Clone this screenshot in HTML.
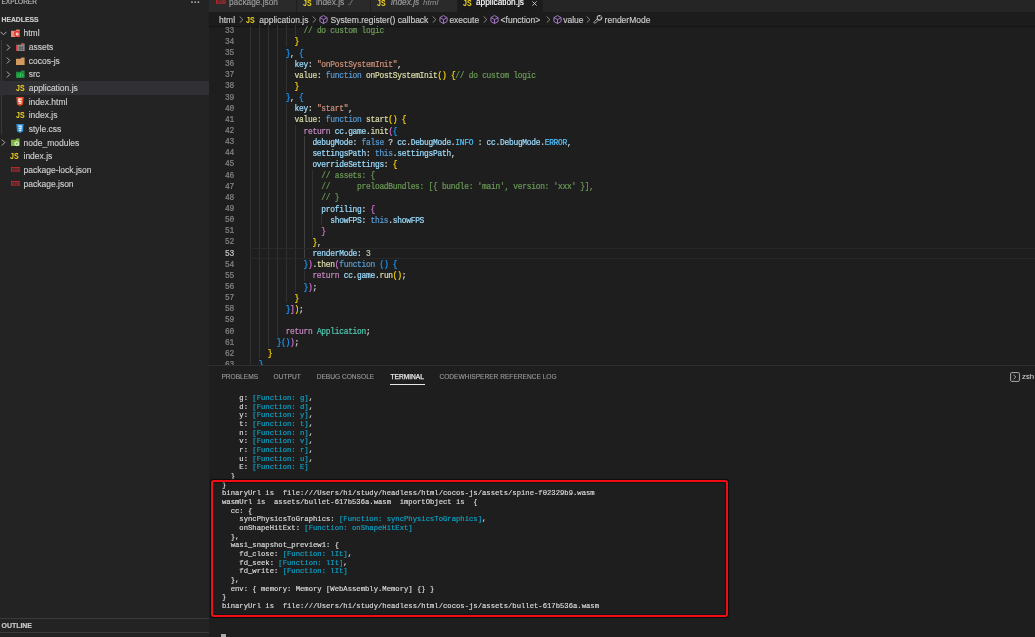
<!DOCTYPE html>
<html><head><meta charset="utf-8"><style>
*{margin:0;padding:0;box-sizing:border-box}
html,body{width:1035px;height:637px;overflow:hidden;background:#1e1e1e}
body{position:relative;font-family:"Liberation Sans",sans-serif}
#root{position:absolute;left:0;top:0;width:1035px;height:637px;will-change:transform;background:#1e1e1e}
#side{position:absolute;left:0;top:0;width:209px;height:637px;background:#232323}
.si{position:absolute;font-size:8.5px;line-height:12px;color:#CCCCCC;white-space:pre;-webkit-text-stroke:0.15px currentColor}
.sel{position:absolute;left:0;width:209px;height:13.3px;background:#303034}
.jsic{position:absolute;font-family:"Liberation Sans",sans-serif;font-weight:bold;color:#F2D31B;white-space:pre;transform:scaleX(0.72);transform-origin:0 0;letter-spacing:-0.1px}
#tabs{position:absolute;left:209px;top:0;width:826px;height:12px;background:#252526}
.tab{position:absolute;top:0;height:12px;background:#2A2A2A;border-right:1px solid #1e1e1e}
.tt{position:absolute;font-size:8.3px;line-height:10px;top:-2.7px;color:#9D9D9D;white-space:pre;-webkit-text-stroke:0.15px currentColor}
#bc{position:absolute;left:209px;top:12px;width:826px;height:14px;background:#1C1C1C;box-shadow:0 1px 1px #141414}
.bt{position:absolute;font-size:8.5px;line-height:12px;top:13.6px;color:#CCCCCC;white-space:pre;-webkit-text-stroke:0.15px currentColor}
.ln{position:absolute;left:209px;width:25px;text-align:right;font-family:"Liberation Mono",monospace;font-size:7.9px;letter-spacing:-0.270px;line-height:11.14px;color:#858585;white-space:pre;-webkit-text-stroke:0.2px currentColor;transform:scaleY(1.16);transform-origin:0 7.68px}
.ln.cur{color:#C6C6C6}
.cl{position:absolute;left:249.9px;font-family:"Liberation Mono",monospace;font-size:7.9px;letter-spacing:-0.270px;line-height:11.14px;white-space:pre;-webkit-text-stroke:0.2px currentColor;transform:scaleY(1.16);transform-origin:0 7.68px}
.cl span{-webkit-text-stroke:0.2px currentColor}
.ig{position:absolute;width:1px}
#panel{position:absolute;left:209px;top:365px;width:826px;height:272px;background:#1E1E1E;border-top:1px solid #2E2E2E}
.pt{position:absolute;top:372px;font-size:6.6px;line-height:9px;color:#9D9D9D;white-space:pre;-webkit-text-stroke:0.1px currentColor}
.tl{position:absolute;left:222.0px;font-family:"Liberation Mono",monospace;font-size:7.2px;letter-spacing:0.020px;line-height:8.657px;color:#DADADA;white-space:pre;-webkit-text-stroke:0.18px currentColor}
.tc{color:#0CA2C6}
</style></head><body><div id="root">
<div id="side"></div>
<div class="si" style="left:1.5px;top:-3.6px;font-size:6.5px;color:#BBBBBB">EXPLORER</div>
<svg style="position:absolute;left:190px;top:0" width="10" height="4" viewBox="0 0 10 4"><circle cx="2" cy="2.1" r="0.85" fill="#C5C5C5"/><circle cx="5.2" cy="2.1" r="0.85" fill="#C5C5C5"/><circle cx="8.4" cy="2.1" r="0.85" fill="#C5C5C5"/></svg>
<div class="si" style="left:1.5px;top:13.5px;font-size:6.8px;font-weight:bold;color:#CCCCCC">HEADLESS</div>
<div style="position:absolute;left:1px;top:40px;width:1px;height:94px;background:#3A3A3A"></div>
<svg style="position:absolute;left:0.3px;top:31.2px" width="7" height="5" viewBox="0 0 7 5"><path d="M0.5 0.8l3 3 3-3" stroke="#C5C5C5" stroke-width="0.85" fill="none"/></svg>
<svg style="position:absolute;left:10.5px;top:29.2px" width="9" height="9" viewBox="0 0 9 9"><path d="M0 1.8h4.6l0.9-1.3H8.6V8H0z" fill="#E98A76"/><circle cx="6.2" cy="4.9" r="3.1" fill="#E5372B"/><circle cx="6.2" cy="4.9" r="1.5" fill="#fff"/><circle cx="6.2" cy="4.9" r="0.7" fill="#E5372B"/></svg>
<div class="si" style="left:23.5px;top:27.40px">html</div>
<svg style="position:absolute;left:5.7px;top:43.5px" width="5" height="7" viewBox="0 0 5 7"><path d="M0.8 0.5l3 3-3 3" stroke="#C5C5C5" stroke-width="0.85" fill="none"/></svg>
<svg style="position:absolute;left:15.7px;top:42.8px" width="9" height="9" viewBox="0 0 9 9"><path d="M0 1.8h4.6l0.9-1.3H8.6V8H0z" fill="#8C8C8C"/><rect x="0" y="2.2" width="1.5" height="5.8" fill="#D23B3B"/><rect x="5" y="0.3" width="3" height="1.4" fill="#D23B3B"/><rect x="3" y="3.5" width="4.2" height="3.6" fill="#555"/><path d="M3.2 5.3h4M5.2 3.5v3.6" stroke="#8C8C8C" stroke-width="0.5"/></svg>
<div class="si" style="left:28.7px;top:41.05px">assets</div>
<svg style="position:absolute;left:5.7px;top:57.2px" width="5" height="7" viewBox="0 0 5 7"><path d="M0.8 0.5l3 3-3 3" stroke="#C5C5C5" stroke-width="0.85" fill="none"/></svg>
<svg style="position:absolute;left:15.7px;top:56.5px" width="9" height="9" viewBox="0 0 9 9"><path d="M0 1.8h4.6l0.9-1.3H8.6V8H0z" fill="#D29A5E"/></svg>
<div class="si" style="left:28.7px;top:54.70px">cocos-js</div>
<svg style="position:absolute;left:5.7px;top:70.8px" width="5" height="7" viewBox="0 0 5 7"><path d="M0.8 0.5l3 3-3 3" stroke="#C5C5C5" stroke-width="0.85" fill="none"/></svg>
<svg style="position:absolute;left:15.7px;top:70.1px" width="9" height="9" viewBox="0 0 9 9"><path d="M0 1.8h4.6l0.9-1.3H8.6V8H0z" fill="#1E8B3D"/><path d="M3 3.6l-1.5 1.6 1.5 1.6M5.8 3.6l1.5 1.6-1.5 1.6M4.9 3.2l-1 4" stroke="#47E06E" stroke-width="0.8" fill="none"/></svg>
<div class="si" style="left:28.7px;top:68.35px">src</div>
<div class="sel" style="top:81.40px"></div>
<svg style="position:absolute;left:15.60px;top:83.60px;overflow:visible" width="8.60" height="7.00"><text x="0" y="6.50" textLength="8.60" lengthAdjust="spacingAndGlyphs" font-family="Liberation Sans" font-weight="bold" font-size="8.70" fill="#F2D31B">JS</text></svg>
<div class="si" style="left:28.7px;top:82.00px">application.js</div>
<svg style="position:absolute;left:15.7px;top:97.1px" width="8" height="9" viewBox="0 0 8 9"><path d="M0.3 0h7.4l-0.7 7.6L4 9 1 7.6z" fill="#E44D26"/><path d="M2.2 1.6h3.6l-0.12 1.2H3.4l0.08 1h2.1l-0.25 2.8L4 7.1 2.7 6.6l-0.08-1.1h1.1l0.05 0.5L4 6.2l0.5-0.2 0.08-1.1H2.4z" fill="#fff"/></svg>
<div class="si" style="left:28.7px;top:95.65px">index.html</div>
<svg style="position:absolute;left:15.60px;top:110.90px;overflow:visible" width="8.60" height="7.00"><text x="0" y="6.50" textLength="8.60" lengthAdjust="spacingAndGlyphs" font-family="Liberation Sans" font-weight="bold" font-size="8.70" fill="#F2D31B">JS</text></svg>
<div class="si" style="left:28.7px;top:109.30px">index.js</div>
<svg style="position:absolute;left:15.7px;top:124.3px" width="8" height="9" viewBox="0 0 8 9"><path d="M0.3 0h7.4l-0.7 7.6L4 9 1 7.6z" fill="#2D8FD5"/><path d="M2.3 1.6h3.5l-0.55 5.2L4 7.2 2.8 6.8l-0.08-1.1h1.1l0.04 0.5L4 6.3l0.45-0.2 0.1-1.3H2.6l-0.1-1.1h2.2l0.1-1H2.4z" fill="#fff"/></svg>
<div class="si" style="left:28.7px;top:122.95px">style.css</div>
<svg style="position:absolute;left:0.7px;top:139.1px" width="5" height="7" viewBox="0 0 5 7"><path d="M0.8 0.5l3 3-3 3" stroke="#C5C5C5" stroke-width="0.85" fill="none"/></svg>
<svg style="position:absolute;left:10.5px;top:138.4px" width="9" height="9" viewBox="0 0 9 9"><path d="M0 1.8h4.6l0.9-1.3H8.6V8H0z" fill="#7CB342"/><path d="M5.8 3.1l2.3 1.3v2.6L5.8 8.3 3.5 7V4.4z" fill="#DDEFCB"/><path d="M5.8 4.4l1.1 0.65v1.3L5.8 7 4.7 6.35v-1.3z" fill="#7CB342"/></svg>
<div class="si" style="left:23.5px;top:136.60px">node_modules</div>
<svg style="position:absolute;left:10.40px;top:151.85px;overflow:visible" width="8.60" height="7.00"><text x="0" y="6.50" textLength="8.60" lengthAdjust="spacingAndGlyphs" font-family="Liberation Sans" font-weight="bold" font-size="8.70" fill="#F2D31B">JS</text></svg>
<div class="si" style="left:23.5px;top:150.25px">index.js</div>
<svg style="position:absolute;left:10.5px;top:167.0px" width="9.5" height="5" viewBox="0 0 9.5 5"><rect x="0.45" y="0.45" width="8.6" height="3.7" fill="none" stroke="#C8262C" stroke-width="0.9"/><path d="M1.7 3.7V1.7h1.5v2M4.2 3.7V1.7h1.6v1.3M6.5 3.7V1.7h1.5v2M7.25 1.7v2" stroke="#B8353A" stroke-width="0.55" fill="none"/></svg>
<div class="si" style="left:23.5px;top:163.90px">package-lock.json</div>
<svg style="position:absolute;left:10.5px;top:180.7px" width="9.5" height="5" viewBox="0 0 9.5 5"><rect x="0.45" y="0.45" width="8.6" height="3.7" fill="none" stroke="#C8262C" stroke-width="0.9"/><path d="M1.7 3.7V1.7h1.5v2M4.2 3.7V1.7h1.6v1.3M6.5 3.7V1.7h1.5v2M7.25 1.7v2" stroke="#B8353A" stroke-width="0.55" fill="none"/></svg>
<div class="si" style="left:23.5px;top:177.55px">package.json</div>
<div style="position:absolute;left:0;top:618px;width:209px;height:1px;background:#3A3A3A"></div>
<div class="si" style="left:1.5px;top:620px;font-size:6.95px;font-weight:bold;color:#CCCCCC">OUTLINE</div>
<div style="position:absolute;left:0;top:632px;width:209px;height:1px;background:#3A3A3A"></div>

<div id="tabs"></div>
<div class="tab" style="left:209px;width:88px"></div>
<div class="tab" style="left:297px;width:74px"></div>
<div class="tab" style="left:371px;width:87px"></div>
<div class="tab" style="left:458px;width:85px;background:#1C1C1C"></div>
<svg style="position:absolute;left:216px;top:-0.6px" width="9.5" height="5" viewBox="0 0 9.5 5"><rect x="0.45" y="0.45" width="8.6" height="3.7" fill="none" stroke="#C8262C" stroke-width="0.9"/><path d="M1.7 3.7V1.7h1.5v2M4.2 3.7V1.7h1.6v1.3M6.5 3.7V1.7h1.5v2M7.25 1.7v2" stroke="#B8353A" stroke-width="0.55" fill="none"/></svg>
<div class="tt" style="left:229px">package.json</div>
<svg style="position:absolute;left:303.20px;top:-1.10px;overflow:visible" width="8.60" height="7.00"><text x="0" y="6.50" textLength="8.60" lengthAdjust="spacingAndGlyphs" font-family="Liberation Sans" font-weight="bold" font-size="8.70" fill="#F2D31B">JS</text></svg>
<div class="tt" style="left:316px">index.js <i style="font-size:8.1px;color:#858585;margin-left:1px">./</i></div>
<svg style="position:absolute;left:377.30px;top:-1.10px;overflow:visible" width="8.60" height="7.00"><text x="0" y="6.50" textLength="8.60" lengthAdjust="spacingAndGlyphs" font-family="Liberation Sans" font-weight="bold" font-size="8.70" fill="#F2D31B">JS</text></svg>
<div class="tt" style="left:391px"><i>index.js</i> <i style="font-size:8.1px;color:#858585;margin-left:1.5px">html</i></div>
<svg style="position:absolute;left:463.20px;top:-1.10px;overflow:visible" width="8.60" height="7.00"><text x="0" y="6.50" textLength="8.60" lengthAdjust="spacingAndGlyphs" font-family="Liberation Sans" font-weight="bold" font-size="8.70" fill="#F2D31B">JS</text></svg>
<div class="tt" style="left:476px;color:#FFFFFF">application.js</div>
<svg style="position:absolute;left:532px;top:0.8px" width="5" height="5" viewBox="0 0 5 5"><path d="M0.4 0.4l4.2 4.2M4.6 0.4l-4.2 4.2" stroke="#D0D0D0" stroke-width="0.9"/></svg>

<div id="bc"></div>
<div class="bt" style="left:219px">html</div><svg style="position:absolute;left:238.5px;top:16.3px" width="5" height="7" viewBox="0 0 5 7"><path d="M0.6 0.4l3.3 3.2-3.3 3.2" stroke="#959595" stroke-width="0.9" fill="none"/></svg><svg style="position:absolute;left:246.20px;top:16.20px;overflow:visible" width="8.60" height="7.00"><text x="0" y="6.50" textLength="8.60" lengthAdjust="spacingAndGlyphs" font-family="Liberation Sans" font-weight="bold" font-size="8.70" fill="#F2D31B">JS</text></svg><div class="bt" style="left:259.3px">application.js</div><svg style="position:absolute;left:311.5px;top:16.3px" width="5" height="7" viewBox="0 0 5 7"><path d="M0.6 0.4l3.3 3.2-3.3 3.2" stroke="#959595" stroke-width="0.9" fill="none"/></svg><svg style="position:absolute;left:319.0px;top:15.0px" width="9" height="9" viewBox="0 0 9 9"><path d="M4.5 0.6l3.6 2v3.9l-3.6 2-3.6-2V2.6z" fill="none" stroke="#B180D7" stroke-width="0.9"/><path d="M0.9 2.6l3.6 2 3.6-2M4.5 4.6v3.9" fill="none" stroke="#B180D7" stroke-width="0.9"/></svg><div class="bt" style="left:330.6px">System.register() callback</div><svg style="position:absolute;left:432.3px;top:16.3px" width="5" height="7" viewBox="0 0 5 7"><path d="M0.6 0.4l3.3 3.2-3.3 3.2" stroke="#959595" stroke-width="0.9" fill="none"/></svg><svg style="position:absolute;left:438.6px;top:15.0px" width="9" height="9" viewBox="0 0 9 9"><path d="M4.5 0.6l3.6 2v3.9l-3.6 2-3.6-2V2.6z" fill="none" stroke="#B180D7" stroke-width="0.9"/><path d="M0.9 2.6l3.6 2 3.6-2M4.5 4.6v3.9" fill="none" stroke="#B180D7" stroke-width="0.9"/></svg><div class="bt" style="left:449.4px">execute</div><svg style="position:absolute;left:482.8px;top:16.3px" width="5" height="7" viewBox="0 0 5 7"><path d="M0.6 0.4l3.3 3.2-3.3 3.2" stroke="#959595" stroke-width="0.9" fill="none"/></svg><svg style="position:absolute;left:489.6px;top:15.0px" width="9" height="9" viewBox="0 0 9 9"><path d="M4.5 0.6l3.6 2v3.9l-3.6 2-3.6-2V2.6z" fill="none" stroke="#B180D7" stroke-width="0.9"/><path d="M0.9 2.6l3.6 2 3.6-2M4.5 4.6v3.9" fill="none" stroke="#B180D7" stroke-width="0.9"/></svg><div class="bt" style="left:500.6px">&lt;function&gt;</div><svg style="position:absolute;left:545.6px;top:16.3px" width="5" height="7" viewBox="0 0 5 7"><path d="M0.6 0.4l3.3 3.2-3.3 3.2" stroke="#959595" stroke-width="0.9" fill="none"/></svg><svg style="position:absolute;left:552.5px;top:15.0px" width="9" height="9" viewBox="0 0 9 9"><path d="M4.5 0.6l3.6 2v3.9l-3.6 2-3.6-2V2.6z" fill="none" stroke="#B180D7" stroke-width="0.9"/><path d="M0.9 2.6l3.6 2 3.6-2M4.5 4.6v3.9" fill="none" stroke="#B180D7" stroke-width="0.9"/></svg><div class="bt" style="left:563.2px">value</div><svg style="position:absolute;left:586.2px;top:16.3px" width="5" height="7" viewBox="0 0 5 7"><path d="M0.6 0.4l3.3 3.2-3.3 3.2" stroke="#959595" stroke-width="0.9" fill="none"/></svg><svg style="position:absolute;left:593.0px;top:14.8px" width="9.5" height="9" viewBox="0 0 9.5 9"><g transform="rotate(-45 4.75 4.5)"><rect x="-0.2" y="3.6" width="5.4" height="1.8" rx="0.9" fill="none" stroke="#C5C5C5" stroke-width="0.75"/><circle cx="7.2" cy="4.5" r="2.2" fill="none" stroke="#C5C5C5" stroke-width="1"/><rect x="7.6" y="3.75" width="2.4" height="1.5" fill="#1C1C1C"/><path d="M7.6 3.75h1.6M7.6 5.25h1.6" stroke="#C5C5C5" stroke-width="0.6"/></g></svg><div class="bt" style="left:604.6px">renderMode</div>

<div style="position:absolute;left:250px;top:26px;width:1px;height:339px;background:#303030"></div>
<div class="ig" style="left:258.84px;top:24.93px;height:11.19px;background:#303030"></div>
<div class="ig" style="left:267.78px;top:24.93px;height:11.19px;background:#303030"></div>
<div class="ig" style="left:276.72px;top:24.93px;height:11.19px;background:#303030"></div>
<div class="ig" style="left:285.66px;top:24.93px;height:11.19px;background:#303030"></div>
<div class="ig" style="left:294.60px;top:24.93px;height:11.19px;background:#303030"></div>
<div class="ig" style="left:258.84px;top:36.07px;height:11.19px;background:#303030"></div>
<div class="ig" style="left:267.78px;top:36.07px;height:11.19px;background:#303030"></div>
<div class="ig" style="left:276.72px;top:36.07px;height:11.19px;background:#303030"></div>
<div class="ig" style="left:285.66px;top:36.07px;height:11.19px;background:#303030"></div>
<div class="ig" style="left:258.84px;top:47.21px;height:11.19px;background:#303030"></div>
<div class="ig" style="left:267.78px;top:47.21px;height:11.19px;background:#303030"></div>
<div class="ig" style="left:276.72px;top:47.21px;height:11.19px;background:#303030"></div>
<div class="ig" style="left:258.84px;top:58.35px;height:11.19px;background:#303030"></div>
<div class="ig" style="left:267.78px;top:58.35px;height:11.19px;background:#303030"></div>
<div class="ig" style="left:276.72px;top:58.35px;height:11.19px;background:#303030"></div>
<div class="ig" style="left:285.66px;top:58.35px;height:11.19px;background:#303030"></div>
<div class="ig" style="left:258.84px;top:69.49px;height:11.19px;background:#303030"></div>
<div class="ig" style="left:267.78px;top:69.49px;height:11.19px;background:#303030"></div>
<div class="ig" style="left:276.72px;top:69.49px;height:11.19px;background:#303030"></div>
<div class="ig" style="left:285.66px;top:69.49px;height:11.19px;background:#303030"></div>
<div class="ig" style="left:258.84px;top:80.63px;height:11.19px;background:#303030"></div>
<div class="ig" style="left:267.78px;top:80.63px;height:11.19px;background:#303030"></div>
<div class="ig" style="left:276.72px;top:80.63px;height:11.19px;background:#303030"></div>
<div class="ig" style="left:285.66px;top:80.63px;height:11.19px;background:#303030"></div>
<div class="ig" style="left:258.84px;top:91.77px;height:11.19px;background:#303030"></div>
<div class="ig" style="left:267.78px;top:91.77px;height:11.19px;background:#303030"></div>
<div class="ig" style="left:276.72px;top:91.77px;height:11.19px;background:#303030"></div>
<div class="ig" style="left:258.84px;top:102.91px;height:11.19px;background:#303030"></div>
<div class="ig" style="left:267.78px;top:102.91px;height:11.19px;background:#303030"></div>
<div class="ig" style="left:276.72px;top:102.91px;height:11.19px;background:#303030"></div>
<div class="ig" style="left:285.66px;top:102.91px;height:11.19px;background:#303030"></div>
<div class="ig" style="left:258.84px;top:114.05px;height:11.19px;background:#303030"></div>
<div class="ig" style="left:267.78px;top:114.05px;height:11.19px;background:#303030"></div>
<div class="ig" style="left:276.72px;top:114.05px;height:11.19px;background:#303030"></div>
<div class="ig" style="left:285.66px;top:114.05px;height:11.19px;background:#303030"></div>
<div class="ig" style="left:258.84px;top:125.19px;height:11.19px;background:#303030"></div>
<div class="ig" style="left:267.78px;top:125.19px;height:11.19px;background:#303030"></div>
<div class="ig" style="left:276.72px;top:125.19px;height:11.19px;background:#303030"></div>
<div class="ig" style="left:285.66px;top:125.19px;height:11.19px;background:#303030"></div>
<div class="ig" style="left:294.60px;top:125.19px;height:11.19px;background:#303030"></div>
<div class="ig" style="left:258.84px;top:136.33px;height:11.19px;background:#303030"></div>
<div class="ig" style="left:267.78px;top:136.33px;height:11.19px;background:#303030"></div>
<div class="ig" style="left:276.72px;top:136.33px;height:11.19px;background:#303030"></div>
<div class="ig" style="left:285.66px;top:136.33px;height:11.19px;background:#303030"></div>
<div class="ig" style="left:294.60px;top:136.33px;height:11.19px;background:#303030"></div>
<div class="ig" style="left:303.54px;top:136.33px;height:11.19px;background:#404040"></div>
<div class="ig" style="left:258.84px;top:147.47px;height:11.19px;background:#303030"></div>
<div class="ig" style="left:267.78px;top:147.47px;height:11.19px;background:#303030"></div>
<div class="ig" style="left:276.72px;top:147.47px;height:11.19px;background:#303030"></div>
<div class="ig" style="left:285.66px;top:147.47px;height:11.19px;background:#303030"></div>
<div class="ig" style="left:294.60px;top:147.47px;height:11.19px;background:#303030"></div>
<div class="ig" style="left:303.54px;top:147.47px;height:11.19px;background:#404040"></div>
<div class="ig" style="left:258.84px;top:158.61px;height:11.19px;background:#303030"></div>
<div class="ig" style="left:267.78px;top:158.61px;height:11.19px;background:#303030"></div>
<div class="ig" style="left:276.72px;top:158.61px;height:11.19px;background:#303030"></div>
<div class="ig" style="left:285.66px;top:158.61px;height:11.19px;background:#303030"></div>
<div class="ig" style="left:294.60px;top:158.61px;height:11.19px;background:#303030"></div>
<div class="ig" style="left:303.54px;top:158.61px;height:11.19px;background:#404040"></div>
<div class="ig" style="left:258.84px;top:169.75px;height:11.19px;background:#303030"></div>
<div class="ig" style="left:267.78px;top:169.75px;height:11.19px;background:#303030"></div>
<div class="ig" style="left:276.72px;top:169.75px;height:11.19px;background:#303030"></div>
<div class="ig" style="left:285.66px;top:169.75px;height:11.19px;background:#303030"></div>
<div class="ig" style="left:294.60px;top:169.75px;height:11.19px;background:#303030"></div>
<div class="ig" style="left:303.54px;top:169.75px;height:11.19px;background:#404040"></div>
<div class="ig" style="left:312.48px;top:169.75px;height:11.19px;background:#303030"></div>
<div class="ig" style="left:258.84px;top:180.89px;height:11.19px;background:#303030"></div>
<div class="ig" style="left:267.78px;top:180.89px;height:11.19px;background:#303030"></div>
<div class="ig" style="left:276.72px;top:180.89px;height:11.19px;background:#303030"></div>
<div class="ig" style="left:285.66px;top:180.89px;height:11.19px;background:#303030"></div>
<div class="ig" style="left:294.60px;top:180.89px;height:11.19px;background:#303030"></div>
<div class="ig" style="left:303.54px;top:180.89px;height:11.19px;background:#404040"></div>
<div class="ig" style="left:312.48px;top:180.89px;height:11.19px;background:#303030"></div>
<div class="ig" style="left:258.84px;top:192.03px;height:11.19px;background:#303030"></div>
<div class="ig" style="left:267.78px;top:192.03px;height:11.19px;background:#303030"></div>
<div class="ig" style="left:276.72px;top:192.03px;height:11.19px;background:#303030"></div>
<div class="ig" style="left:285.66px;top:192.03px;height:11.19px;background:#303030"></div>
<div class="ig" style="left:294.60px;top:192.03px;height:11.19px;background:#303030"></div>
<div class="ig" style="left:303.54px;top:192.03px;height:11.19px;background:#404040"></div>
<div class="ig" style="left:312.48px;top:192.03px;height:11.19px;background:#303030"></div>
<div class="ig" style="left:258.84px;top:203.17px;height:11.19px;background:#303030"></div>
<div class="ig" style="left:267.78px;top:203.17px;height:11.19px;background:#303030"></div>
<div class="ig" style="left:276.72px;top:203.17px;height:11.19px;background:#303030"></div>
<div class="ig" style="left:285.66px;top:203.17px;height:11.19px;background:#303030"></div>
<div class="ig" style="left:294.60px;top:203.17px;height:11.19px;background:#303030"></div>
<div class="ig" style="left:303.54px;top:203.17px;height:11.19px;background:#404040"></div>
<div class="ig" style="left:312.48px;top:203.17px;height:11.19px;background:#303030"></div>
<div class="ig" style="left:258.84px;top:214.31px;height:11.19px;background:#303030"></div>
<div class="ig" style="left:267.78px;top:214.31px;height:11.19px;background:#303030"></div>
<div class="ig" style="left:276.72px;top:214.31px;height:11.19px;background:#303030"></div>
<div class="ig" style="left:285.66px;top:214.31px;height:11.19px;background:#303030"></div>
<div class="ig" style="left:294.60px;top:214.31px;height:11.19px;background:#303030"></div>
<div class="ig" style="left:303.54px;top:214.31px;height:11.19px;background:#404040"></div>
<div class="ig" style="left:312.48px;top:214.31px;height:11.19px;background:#303030"></div>
<div class="ig" style="left:321.42px;top:214.31px;height:11.19px;background:#303030"></div>
<div class="ig" style="left:258.84px;top:225.45px;height:11.19px;background:#303030"></div>
<div class="ig" style="left:267.78px;top:225.45px;height:11.19px;background:#303030"></div>
<div class="ig" style="left:276.72px;top:225.45px;height:11.19px;background:#303030"></div>
<div class="ig" style="left:285.66px;top:225.45px;height:11.19px;background:#303030"></div>
<div class="ig" style="left:294.60px;top:225.45px;height:11.19px;background:#303030"></div>
<div class="ig" style="left:303.54px;top:225.45px;height:11.19px;background:#404040"></div>
<div class="ig" style="left:312.48px;top:225.45px;height:11.19px;background:#303030"></div>
<div class="ig" style="left:258.84px;top:236.59px;height:11.19px;background:#303030"></div>
<div class="ig" style="left:267.78px;top:236.59px;height:11.19px;background:#303030"></div>
<div class="ig" style="left:276.72px;top:236.59px;height:11.19px;background:#303030"></div>
<div class="ig" style="left:285.66px;top:236.59px;height:11.19px;background:#303030"></div>
<div class="ig" style="left:294.60px;top:236.59px;height:11.19px;background:#303030"></div>
<div class="ig" style="left:303.54px;top:236.59px;height:11.19px;background:#404040"></div>
<div class="ig" style="left:258.84px;top:247.73px;height:11.19px;background:#303030"></div>
<div class="ig" style="left:267.78px;top:247.73px;height:11.19px;background:#303030"></div>
<div class="ig" style="left:276.72px;top:247.73px;height:11.19px;background:#303030"></div>
<div class="ig" style="left:285.66px;top:247.73px;height:11.19px;background:#303030"></div>
<div class="ig" style="left:294.60px;top:247.73px;height:11.19px;background:#303030"></div>
<div class="ig" style="left:303.54px;top:247.73px;height:11.19px;background:#404040"></div>
<div class="ig" style="left:258.84px;top:258.87px;height:11.19px;background:#303030"></div>
<div class="ig" style="left:267.78px;top:258.87px;height:11.19px;background:#303030"></div>
<div class="ig" style="left:276.72px;top:258.87px;height:11.19px;background:#303030"></div>
<div class="ig" style="left:285.66px;top:258.87px;height:11.19px;background:#303030"></div>
<div class="ig" style="left:294.60px;top:258.87px;height:11.19px;background:#303030"></div>
<div class="ig" style="left:258.84px;top:270.01px;height:11.19px;background:#303030"></div>
<div class="ig" style="left:267.78px;top:270.01px;height:11.19px;background:#303030"></div>
<div class="ig" style="left:276.72px;top:270.01px;height:11.19px;background:#303030"></div>
<div class="ig" style="left:285.66px;top:270.01px;height:11.19px;background:#303030"></div>
<div class="ig" style="left:294.60px;top:270.01px;height:11.19px;background:#303030"></div>
<div class="ig" style="left:303.54px;top:270.01px;height:11.19px;background:#303030"></div>
<div class="ig" style="left:258.84px;top:281.15px;height:11.19px;background:#303030"></div>
<div class="ig" style="left:267.78px;top:281.15px;height:11.19px;background:#303030"></div>
<div class="ig" style="left:276.72px;top:281.15px;height:11.19px;background:#303030"></div>
<div class="ig" style="left:285.66px;top:281.15px;height:11.19px;background:#303030"></div>
<div class="ig" style="left:294.60px;top:281.15px;height:11.19px;background:#303030"></div>
<div class="ig" style="left:258.84px;top:292.29px;height:11.19px;background:#303030"></div>
<div class="ig" style="left:267.78px;top:292.29px;height:11.19px;background:#303030"></div>
<div class="ig" style="left:276.72px;top:292.29px;height:11.19px;background:#303030"></div>
<div class="ig" style="left:285.66px;top:292.29px;height:11.19px;background:#303030"></div>
<div class="ig" style="left:258.84px;top:303.43px;height:11.19px;background:#303030"></div>
<div class="ig" style="left:267.78px;top:303.43px;height:11.19px;background:#303030"></div>
<div class="ig" style="left:276.72px;top:303.43px;height:11.19px;background:#303030"></div>
<div class="ig" style="left:258.84px;top:314.57px;height:11.19px;background:#303030"></div>
<div class="ig" style="left:267.78px;top:314.57px;height:11.19px;background:#303030"></div>
<div class="ig" style="left:276.72px;top:314.57px;height:11.19px;background:#303030"></div>
<div class="ig" style="left:258.84px;top:325.71px;height:11.19px;background:#303030"></div>
<div class="ig" style="left:267.78px;top:325.71px;height:11.19px;background:#303030"></div>
<div class="ig" style="left:276.72px;top:325.71px;height:11.19px;background:#303030"></div>
<div class="ig" style="left:258.84px;top:336.85px;height:11.19px;background:#303030"></div>
<div class="ig" style="left:267.78px;top:336.85px;height:11.19px;background:#303030"></div>
<div class="ig" style="left:258.84px;top:347.99px;height:11.19px;background:#303030"></div>
<div style="position:absolute;left:250px;top:247.73px;width:785px;height:11.14px;border-top:1px solid #282828;border-bottom:1px solid #282828"></div>
<div class="ln" style="top:24.78px">33</div>
<div class="cl" style="top:25.28px"><span style="color:#D4D4D4">            </span><span style="color:#6A9955">// do custom logic</span></div>
<div class="ln" style="top:35.92px">34</div>
<div class="cl" style="top:36.42px"><span style="color:#D4D4D4">          </span><span style="color:#FFD700">}</span></div>
<div class="ln" style="top:47.06px">35</div>
<div class="cl" style="top:47.56px"><span style="color:#D4D4D4">        </span><span style="color:#179FFF">}</span><span style="color:#D4D4D4">, </span><span style="color:#179FFF">{</span></div>
<div class="ln" style="top:58.20px">36</div>
<div class="cl" style="top:58.70px"><span style="color:#D4D4D4">          </span><span style="color:#9CDCFE">key</span><span style="color:#D4D4D4">: </span><span style="color:#CE9178">&quot;onPostSystemInit&quot;</span><span style="color:#D4D4D4">,</span></div>
<div class="ln" style="top:69.34px">37</div>
<div class="cl" style="top:69.84px"><span style="color:#D4D4D4">          </span><span style="color:#DCDCAA">value</span><span style="color:#D4D4D4">: </span><span style="color:#569CD6">function</span><span style="color:#D4D4D4"> </span><span style="color:#DCDCAA">onPostSystemInit</span><span style="color:#FFD700">()</span><span style="color:#D4D4D4"> </span><span style="color:#FFD700">{</span><span style="color:#6A9955">// do custom logic</span></div>
<div class="ln" style="top:80.48px">38</div>
<div class="cl" style="top:80.98px"><span style="color:#D4D4D4">          </span><span style="color:#FFD700">}</span></div>
<div class="ln" style="top:91.62px">39</div>
<div class="cl" style="top:92.12px"><span style="color:#D4D4D4">        </span><span style="color:#179FFF">}</span><span style="color:#D4D4D4">, </span><span style="color:#179FFF">{</span></div>
<div class="ln" style="top:102.76px">40</div>
<div class="cl" style="top:103.26px"><span style="color:#D4D4D4">          </span><span style="color:#9CDCFE">key</span><span style="color:#D4D4D4">: </span><span style="color:#CE9178">&quot;start&quot;</span><span style="color:#D4D4D4">,</span></div>
<div class="ln" style="top:113.90px">41</div>
<div class="cl" style="top:114.40px"><span style="color:#D4D4D4">          </span><span style="color:#DCDCAA">value</span><span style="color:#D4D4D4">: </span><span style="color:#569CD6">function</span><span style="color:#D4D4D4"> </span><span style="color:#DCDCAA">start</span><span style="color:#FFD700">()</span><span style="color:#D4D4D4"> </span><span style="color:#FFD700">{</span></div>
<div class="ln" style="top:125.04px">42</div>
<div class="cl" style="top:125.54px"><span style="color:#D4D4D4">            </span><span style="color:#C586C0">return</span><span style="color:#D4D4D4"> </span><span style="color:#9CDCFE">cc</span><span style="color:#D4D4D4">.</span><span style="color:#9CDCFE">game</span><span style="color:#D4D4D4">.</span><span style="color:#DCDCAA">init</span><span style="color:#DA70D6">(</span><span style="color:#179FFF">{</span></div>
<div class="ln" style="top:136.18px">43</div>
<div class="cl" style="top:136.68px"><span style="color:#D4D4D4">              </span><span style="color:#9CDCFE">debugMode</span><span style="color:#D4D4D4">: </span><span style="color:#569CD6">false</span><span style="color:#D4D4D4"> ? </span><span style="color:#9CDCFE">cc</span><span style="color:#D4D4D4">.</span><span style="color:#9CDCFE">DebugMode</span><span style="color:#D4D4D4">.</span><span style="color:#4FC1FF">INFO</span><span style="color:#D4D4D4"> : </span><span style="color:#9CDCFE">cc</span><span style="color:#D4D4D4">.</span><span style="color:#9CDCFE">DebugMode</span><span style="color:#D4D4D4">.</span><span style="color:#4FC1FF">ERROR</span><span style="color:#D4D4D4">,</span></div>
<div class="ln" style="top:147.32px">44</div>
<div class="cl" style="top:147.82px"><span style="color:#D4D4D4">              </span><span style="color:#9CDCFE">settingsPath</span><span style="color:#D4D4D4">: </span><span style="color:#569CD6">this</span><span style="color:#D4D4D4">.</span><span style="color:#9CDCFE">settingsPath</span><span style="color:#D4D4D4">,</span></div>
<div class="ln" style="top:158.46px">45</div>
<div class="cl" style="top:158.96px"><span style="color:#D4D4D4">              </span><span style="color:#9CDCFE">overrideSettings</span><span style="color:#D4D4D4">: </span><span style="color:#FFD700">{</span></div>
<div class="ln" style="top:169.60px">46</div>
<div class="cl" style="top:170.10px"><span style="color:#D4D4D4">                </span><span style="color:#6A9955">// assets: {</span></div>
<div class="ln" style="top:180.74px">47</div>
<div class="cl" style="top:181.24px"><span style="color:#D4D4D4">                </span><span style="color:#6A9955">//      preloadBundles: [{ bundle: &#x27;main&#x27;, version: &#x27;xxx&#x27; }],</span></div>
<div class="ln" style="top:191.88px">48</div>
<div class="cl" style="top:192.38px"><span style="color:#D4D4D4">                </span><span style="color:#6A9955">// }</span></div>
<div class="ln" style="top:203.02px">49</div>
<div class="cl" style="top:203.52px"><span style="color:#D4D4D4">                </span><span style="color:#9CDCFE">profiling</span><span style="color:#D4D4D4">: </span><span style="color:#DA70D6">{</span></div>
<div class="ln" style="top:214.16px">50</div>
<div class="cl" style="top:214.66px"><span style="color:#D4D4D4">                  </span><span style="color:#9CDCFE">showFPS</span><span style="color:#D4D4D4">: </span><span style="color:#569CD6">this</span><span style="color:#D4D4D4">.</span><span style="color:#9CDCFE">showFPS</span></div>
<div class="ln" style="top:225.30px">51</div>
<div class="cl" style="top:225.80px"><span style="color:#D4D4D4">                </span><span style="color:#DA70D6">}</span></div>
<div class="ln" style="top:236.44px">52</div>
<div class="cl" style="top:236.94px"><span style="color:#D4D4D4">              </span><span style="color:#FFD700">}</span><span style="color:#D4D4D4">,</span></div>
<div class="ln cur" style="top:247.58px">53</div>
<div class="cl" style="top:248.08px"><span style="color:#D4D4D4">              </span><span style="color:#9CDCFE">renderMode</span><span style="color:#D4D4D4">: </span><span style="color:#B5CEA8">3</span></div>
<div class="ln" style="top:258.72px">54</div>
<div class="cl" style="top:259.22px"><span style="color:#D4D4D4">            </span><span style="color:#179FFF">}</span><span style="color:#DA70D6">)</span><span style="color:#D4D4D4">.</span><span style="color:#DCDCAA">then</span><span style="color:#DA70D6">(</span><span style="color:#569CD6">function</span><span style="color:#D4D4D4"> </span><span style="color:#179FFF">()</span><span style="color:#D4D4D4"> </span><span style="color:#179FFF">{</span></div>
<div class="ln" style="top:269.86px">55</div>
<div class="cl" style="top:270.36px"><span style="color:#D4D4D4">              </span><span style="color:#C586C0">return</span><span style="color:#D4D4D4"> </span><span style="color:#9CDCFE">cc</span><span style="color:#D4D4D4">.</span><span style="color:#9CDCFE">game</span><span style="color:#D4D4D4">.</span><span style="color:#DCDCAA">run</span><span style="color:#FFD700">()</span><span style="color:#D4D4D4">;</span></div>
<div class="ln" style="top:281.00px">56</div>
<div class="cl" style="top:281.50px"><span style="color:#D4D4D4">            </span><span style="color:#179FFF">}</span><span style="color:#DA70D6">)</span><span style="color:#D4D4D4">;</span></div>
<div class="ln" style="top:292.14px">57</div>
<div class="cl" style="top:292.64px"><span style="color:#D4D4D4">          </span><span style="color:#FFD700">}</span></div>
<div class="ln" style="top:303.28px">58</div>
<div class="cl" style="top:303.78px"><span style="color:#D4D4D4">        </span><span style="color:#179FFF">}</span><span style="color:#DA70D6">]</span><span style="color:#FFD700">)</span><span style="color:#D4D4D4">;</span></div>
<div class="ln" style="top:314.42px">59</div>
<div class="cl" style="top:314.92px"></div>
<div class="ln" style="top:325.56px">60</div>
<div class="cl" style="top:326.06px"><span style="color:#D4D4D4">        </span><span style="color:#C586C0">return</span><span style="color:#D4D4D4"> </span><span style="color:#4EC9B0">Application</span><span style="color:#D4D4D4">;</span></div>
<div class="ln" style="top:336.70px">61</div>
<div class="cl" style="top:337.20px"><span style="color:#D4D4D4">      </span><span style="color:#179FFF">}</span><span style="color:#179FFF">()</span><span style="color:#DA70D6">)</span><span style="color:#D4D4D4">;</span></div>
<div class="ln" style="top:347.84px">62</div>
<div class="cl" style="top:348.34px"><span style="color:#D4D4D4">    </span><span style="color:#FFD700">}</span></div>
<div class="ln" style="top:358.98px">63</div>
<div class="cl" style="top:359.48px"><span style="color:#D4D4D4">  </span><span style="color:#179FFF">}</span><span style="color:#D4D4D4">,</span></div>

<div id="panel"></div>
<div class="pt" style="left:221.4px">PROBLEMS</div>
<div class="pt" style="left:273.6px">OUTPUT</div>
<div class="pt" style="left:316.7px">DEBUG CONSOLE</div>
<div class="pt" style="left:390.5px;color:#E7E7E7;-webkit-text-stroke:0.25px #E7E7E7">TERMINAL</div>
<div style="position:absolute;left:390px;top:384px;width:35px;height:1px;background:#E7E7E7"></div>
<div class="pt" style="left:439.4px">CODEWHISPERER REFERENCE LOG</div>
<svg style="position:absolute;left:1009.5px;top:371.5px" width="10" height="10" viewBox="0 0 10 10"><rect x="0.6" y="0.6" width="8.8" height="8.8" rx="1" fill="none" stroke="#BBBBBB" stroke-width="0.9"/><path d="M3.6 2.8l2.2 2.2-2.2 2.2" stroke="#BBBBBB" stroke-width="0.9" fill="none"/></svg>
<div class="pt" style="left:1022px;color:#CCCCCC;font-size:7.8px">zsh</div>
<div class="tl" style="top:394.17px">    g: <span class="tc">[Function: g]</span>,</div>
<div class="tl" style="top:402.83px">    d: <span class="tc">[Function: d]</span>,</div>
<div class="tl" style="top:411.49px">    y: <span class="tc">[Function: y]</span>,</div>
<div class="tl" style="top:420.14px">    t: <span class="tc">[Function: t]</span>,</div>
<div class="tl" style="top:428.80px">    n: <span class="tc">[Function: n]</span>,</div>
<div class="tl" style="top:437.46px">    v: <span class="tc">[Function: v]</span>,</div>
<div class="tl" style="top:446.11px">    r: <span class="tc">[Function: r]</span>,</div>
<div class="tl" style="top:454.77px">    u: <span class="tc">[Function: u]</span>,</div>
<div class="tl" style="top:463.43px">    E: <span class="tc">[Function: E]</span></div>
<div class="tl" style="top:472.08px">  }</div>
<div class="tl" style="top:480.74px">}</div>
<div class="tl" style="top:489.40px">binaryUrl is  file:///Users/hi/study/headless/html/cocos-js/assets/spine-f02329b9.wasm</div>
<div class="tl" style="top:498.06px">wasmUrl is  assets/bullet-617b536a.wasm  importObject is  {</div>
<div class="tl" style="top:506.71px">  cc: {</div>
<div class="tl" style="top:515.37px">    syncPhysicsToGraphics: <span class="tc">[Function: syncPhysicsToGraphics]</span>,</div>
<div class="tl" style="top:524.03px">    onShapeHitExt: <span class="tc">[Function: onShapeHitExt]</span></div>
<div class="tl" style="top:532.68px">  },</div>
<div class="tl" style="top:541.34px">  wasi_snapshot_preview1: {</div>
<div class="tl" style="top:550.00px">    fd_close: <span class="tc">[Function: lIt]</span>,</div>
<div class="tl" style="top:558.65px">    fd_seek: <span class="tc">[Function: lIt]</span>,</div>
<div class="tl" style="top:567.31px">    fd_write: <span class="tc">[Function: lIt]</span></div>
<div class="tl" style="top:575.97px">  },</div>
<div class="tl" style="top:584.63px">  env: { memory: Memory [WebAssembly.Memory] {} }</div>
<div class="tl" style="top:593.28px">}</div>
<div class="tl" style="top:601.94px">binaryUrl is  file:///Users/hi/study/headless/html/cocos-js/assets/bullet-617b536a.wasm</div>
<div style="position:absolute;left:211px;top:480px;width:517px;height:137px;border:2px solid #F20C14;border-radius:3px;box-shadow:0 0 1px 0.5px #0c0c0c, inset 0 0 1px 0.5px #0c0c0c"></div>
<div style="position:absolute;left:221.2px;top:634.3px;width:4.8px;height:3px;background:#AAAAAA"></div>
</div></body></html>
